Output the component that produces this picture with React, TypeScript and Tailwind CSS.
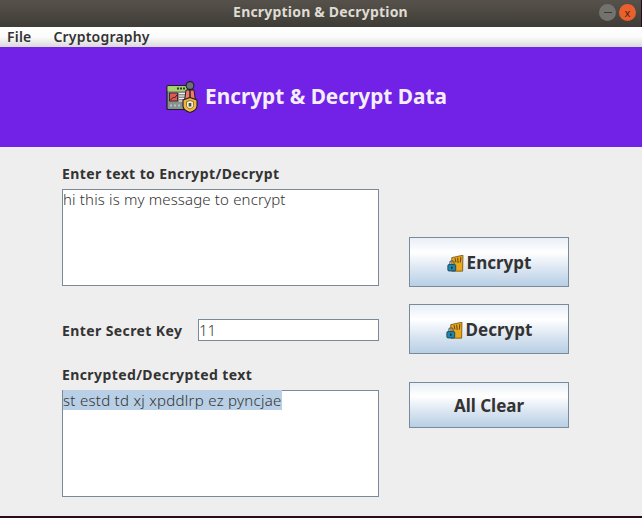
import React from "react";

const FONT = "font-['Noto_Sans','Open_Sans',sans-serif]";

const HeaderIcon = () => (
  <svg width="32" height="32" viewBox="0 0 32 32" className="shrink-0">
    <rect x="1" y="4.500" width="21" height="24" rx="1" fill="#8e8e8e" stroke="#1d1d2b" strokeWidth="1.200" />
    <rect x="1.600" y="5.100" width="19.800" height="5" fill="#a5d46a" />
    <rect x="11" y="6.500" width="2" height="2" fill="#2d3a1e" />
    <rect x="14" y="6.500" width="2" height="2" fill="#2d3a1e" />
    <rect x="17" y="6.500" width="2" height="2" fill="#2d3a1e" />
    <rect x="3.500" y="12" width="8" height="8" fill="#e2584c" stroke="#1d1d2b" strokeWidth="0.800" />
    <path d="M4.500 19l3-3 1 1 2.500-3" stroke="#1d1d2b" fill="none" strokeWidth="0.900" />
    <path d="M13 12.500h6M13 15h6M13 17.500h6M13 20h5" stroke="#f2f2f2" strokeWidth="1.100" />
    <path d="M4 24.500h2M8 24.500h2M12 24.500h2" stroke="#8fd0c4" strokeWidth="2" />
    <path d="M20 9h8l1.500 11h-11z" fill="#ef7a66" stroke="#1d1d2b" strokeWidth="1" />
    <path d="M24 9v8" stroke="#1d1d2b" strokeWidth="1.400" />
    <circle cx="24" cy="4.500" r="3.900" fill="#6e7178" stroke="#1d1d2b" strokeWidth="1.100" />
    <path d="M24 16.500l7 2.500v6c0 3-4 5.500-7 6.500-3-1-7-3.500-7-6.500v-6z" fill="#f0b73c" stroke="#1d1d2b" strokeWidth="1.100" />
    <path d="M24 19.500l3.500 1.200v4c0 1.500-2 2.700-3.500 3.300-1.500-.6-3.500-1.800-3.500-3.300v-4z" fill="#f6ecd0" stroke="#7b5a17" strokeWidth="0.800" />
    <rect x="22.700" y="22" width="2.600" height="3.500" fill="#4a4a52" />
  </svg>
);

const LockIcon = () => (
  <svg width="17" height="17" viewBox="0 0 16 16" className="shrink-0">
    <path d="M4.500 2.500l10.500-2.300-.3 15H4.500z" fill="#eca81c" stroke="#7a520c" strokeWidth="0.800" />
    <path d="M7.500 3l1 4M10 2.500l.5 5M13 2l-.5 5" stroke="#6b4a0c" strokeWidth="1" />
    <path d="M2.700 9V7.400a2 2 0 0 1 4 0V9" fill="none" stroke="#55636b" strokeWidth="1.100" />
    <rect x="0.800" y="9" width="7.400" height="6" rx="1" fill="#1d87b0" stroke="#163f52" strokeWidth="0.800" />
    <rect x="3.800" y="11" width="1.400" height="2" fill="#0c2c3a" />
  </svg>
);

const ActionButton = ({ label, icon, className }: { label: string; icon?: boolean; className: string }) => (
  <button
    className={`flex w-[160px] items-center justify-center gap-[3px] border border-[#7a8a99] bg-[linear-gradient(180deg,#e8eff7_0%,#ffffff_30%,#dae5f1_65%,#b8cfe5_100%)] pt-[2px] text-[17px] font-bold text-[#333333] ${className}`}
  >
    {icon && <LockIcon />}
    {label}
  </button>
);

const Label = ({ children }: { children: React.ReactNode }) => (
  <div className="text-sm leading-5 font-bold tracking-[0.4px] text-[#333333]">{children}</div>
);

export default function App() {
  return (
    <div className={`flex h-[518px] w-[642px] flex-col overflow-hidden bg-[#eeeeee] ${FONT}`}>
      <div className="relative flex h-[27px] shrink-0 items-center justify-center border-r border-[#2c0a1e] bg-[linear-gradient(180deg,#56524b_0%,#3f3c37_100%)] pb-[3px] text-sm font-bold tracking-[0.2px] text-[#dfdbd2]">
        Encryption &amp; Decryption
        <div className="absolute top-[4px] right-[5px] flex items-center gap-[3px]">
          <div className="flex h-[17px] w-[17px] items-center justify-center rounded-full bg-[#74726d]">
            <div className="h-px w-[8px] bg-[#3a3834]" />
          </div>
          <div className="flex h-[17px] w-[17px] items-center justify-center rounded-full bg-[#e9602c] text-[11px] leading-none font-normal text-[#4a2010]">
            x
          </div>
        </div>
      </div>

      <div className="flex h-[20px] shrink-0 items-center gap-[22px] bg-[linear-gradient(180deg,#ffffff_0%,#fbfbfb_50%,#d9d9d9_100%)] pl-[7px] text-sm font-semibold tracking-[0.2px] text-[#333333]">
        <span>File</span>
        <span>Cryptography</span>
      </div>

      <div className="flex h-[100px] shrink-0 items-center gap-[7px] bg-[#7221e6] pl-[166px] text-[20.800px] font-bold text-[#f4eefc]">
        <HeaderIcon />
        Encrypt &amp; Decrypt Data
      </div>

      <div className="flex flex-1 items-start gap-[30px] pl-[62px]">
        <div className="flex w-[317px] flex-col pt-[17px]">
          <Label>Enter text to Encrypt/Decrypt</Label>
          <div className="mt-[5px] h-[97px] border border-[#7a8a99] bg-white text-[15px] leading-[18px] font-light tracking-[0.15px] text-[#333333]">
            hi this is my message to encrypt
          </div>
          <div className="mt-[33px] flex h-[22px] items-center justify-between">
            <div className="pt-px tracking-[0.1px]">
              <Label>Enter Secret Key</Label>
            </div>
            <div className="flex h-[22px] w-[181px] items-center border border-[#7a8a99] bg-white text-[15px] font-light text-[#333333]">
              11
            </div>
          </div>
          <div className="mt-[24px]">
            <Label>Encrypted/Decrypted text</Label>
          </div>
          <div className="mt-[5px] h-[107px] border border-[#7a8a99] bg-white text-[15px] leading-[18px] font-light tracking-[0.28px] text-[#333333]">
            <span className="bg-[#b8cfe5]">st estd td xj xpddlrp ez pyncjae</span>
          </div>
        </div>

        <div className="flex flex-col pt-[90px]">
          <ActionButton label="Encrypt" icon className="h-[50px]" />
          <ActionButton label="Decrypt" icon className="mt-[17px] h-[50px]" />
          <ActionButton label="All Clear" className="mt-[28px] h-[46px]" />
        </div>
      </div>

      <div className="h-[2px] shrink-0 bg-[#2c0a1e]" />
    </div>
  );
}
